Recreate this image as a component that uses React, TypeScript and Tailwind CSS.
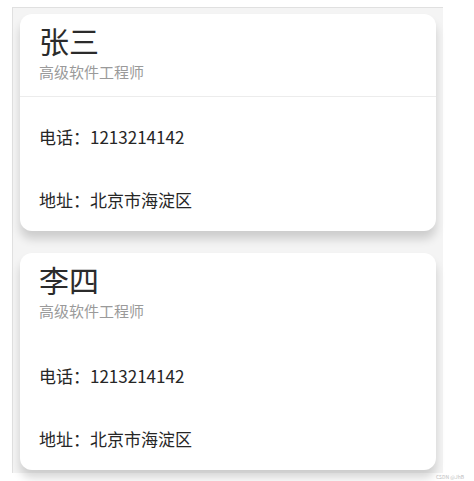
const PEOPLE = [
  { name: "张三", title: "高级软件工程师", phone: "1213214142", address: "北京市海淀区", divider: true },
  { name: "李四", title: "高级软件工程师", phone: "1213214142", address: "北京市海淀区", divider: false },
];

const Card = ({ p }: { p: (typeof PEOPLE)[number] }) => (
  <div className="h-[217px] rounded-[12px] bg-white shadow-[0_8px_10px_rgba(0,0,0,0.16)]">
    <div className="px-[19px] pt-[8px] pb-[14px]">
      <p className="text-[30px] leading-[36px] text-[#2b2b2b]">{p.name}</p>
      <p className="mt-[4px] text-[15px] leading-[20px] text-[#9a9a9a]">{p.title}</p>
    </div>
    <div className={p.divider ? "h-px bg-[#ececec]" : "h-px"} />
    <div className="px-[19px] pt-[28px] text-[17px] leading-[24px] text-[#262626]">
      <p>电话：{p.phone}</p>
      <p className="mt-[39px]">地址：{p.address}</p>
    </div>
  </div>
);

export default function App() {
  return (
    <div className="relative h-[481px] w-[474px] bg-white font-['Noto_Sans_CJK_SC',sans-serif]">
      <div className="ml-[12px] mt-[7px] h-[466px] w-[431px] border-l border-t border-[#e0e0e0] bg-[#f4f4f4] px-[7px] pt-[6px]">
        <div className="flex flex-col gap-[22px]">
          {PEOPLE.map((p) => (
            <Card key={p.name} p={p} />
          ))}
        </div>
      </div>
      <span className="absolute right-[10px] bottom-[8px] text-[5px] leading-[6px] text-[#bbbbbb]">CSDN @JhB</span>
    </div>
  );
}
